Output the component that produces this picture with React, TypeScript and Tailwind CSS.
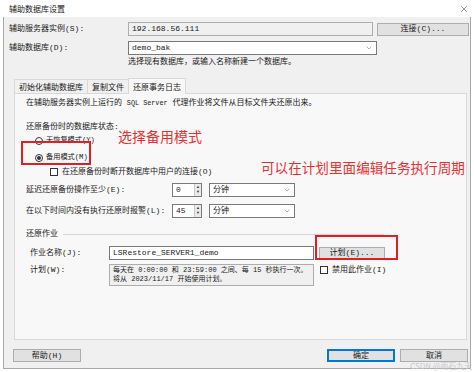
import { X, ChevronDown } from 'lucide-react';

const mono = "font-['Liberation_Mono','Noto_Sans_CJK_SC',monospace]";
const sans = "font-['Noto_Sans_CJK_SC','Noto_Sans',sans-serif]";

function Combo({ value, width }: { value: string; width: string }) {
  return (
    <div className={`${width} h-[14px] bg-white border border-[#7a7a7a] flex items-center justify-between pl-[3px] pr-[3px]`}>
      <span className="leading-none">{value}</span>
      <ChevronDown size={8} strokeWidth={1.5} className="text-[#606060]" />
    </div>
  );
}

function Spin({ value }: { value: string }) {
  return (
    <div className="w-[30px] h-[14px] bg-white border border-[#7a7a7a] flex items-stretch">
      <span className="flex-1 pl-[3px] leading-[12px]">{value}</span>
      <div className="w-[7px] flex flex-col items-center justify-center bg-[#eaeaea] border-l border-[#c8c8c8] text-[4px] leading-[5px] text-[#333]">
        <span>▲</span>
        <span>▼</span>
      </div>
    </div>
  );
}

function Radio({ checked, label }: { checked?: boolean; label: string }) {
  return (
    <div className="flex items-center gap-[3px] h-[10px] ml-[9px]">
      <span className="w-[8px] h-[8px] rounded-full border border-[#333] bg-white flex items-center justify-center">
        {checked && <span className="w-[4px] h-[4px] rounded-full bg-[#333]" />}
      </span>
      <span className="leading-none text-[7.2px]">{label}</span>
    </div>
  );
}

function Button({ label, width, focused }: { label: string; width: string; focused?: boolean }) {
  return (
    <div
      className={`${width} h-[13px] flex items-center justify-center bg-[#e1e1e1] border leading-none ${
        focused ? 'border-[#0078d7] shadow-[inset_0_0_0_1px_#0078d7]' : 'border-[#adadad]'
      }`}
    >
      {label}
    </div>
  );
}

export default function App() {
  return (
    <div className={`relative w-[474px] h-[372px] overflow-hidden bg-white text-[8px] text-[#1a1a1a] ${mono}`}>
      {/* Title bar */}
      <div className={`h-[17px] flex items-center justify-between pl-[9px] pr-[5px] ${sans}`}>
        <span className="text-[8px] leading-none">辅助数据库设置</span>
        <X size={10} strokeWidth={1.2} className="text-[#333]" />
      </div>

      {/* Window body */}
      <div className="ml-[3px] mr-[3px] h-[352px] bg-[#f0f0f0] border-l border-r border-b border-[#a8a8a8] pt-[5px]">
        <div className="flex items-center h-[14px] pl-[5px]">
          <span className="w-[119px]">辅助服务器实例(S):</span>
          <div className="w-[245px] h-[14px] border border-[#adadad] bg-[#f0f0f0] pl-[3px] leading-[12px]">192.168.56.111</div>
          <div className="ml-[4px]">
            <Button label="连接(C)..." width="w-[92px]" />
          </div>
        </div>
        <div className="flex items-center h-[15px] pl-[5px] mt-[4px]">
          <span className="w-[119px]">辅助数据库(D):</span>
          <Combo value="demo_bak" width="w-[249px]" />
        </div>
        <div className="pl-[124px] mt-[2px] h-[10px] leading-[10px]">选择现有数据库，或输入名称新建一个数据库。</div>

        {/* Tabs */}
        <div className={`flex items-end h-[16px] mt-[10px] pl-[10px] ${sans}`}>
          <div className="h-[14px] px-[4px] flex items-center border-t border-l border-[#d9d9d9] leading-none">初始化辅助数据库</div>
          <div className="h-[14px] px-[4px] flex items-center border-t border-l border-[#d9d9d9] leading-none">复制文件</div>
          <div className="h-[16px] px-[4px] flex items-center bg-[#f8f8f8] border-t border-l border-r border-[#d9d9d9] leading-none -mb-px relative z-10">
            还原事务日志
          </div>
        </div>

        {/* Tab panel */}
        <div className="ml-[10px] w-[453px] h-[247px] bg-[#f8f8f8] border border-[#d9d9d9] pl-[11px] pt-[4px]">
          <div className="h-[10px] leading-[10px]">
            在辅助服务器实例上运行的 <span className="text-[6.8px]">SQL Server</span> 代理作业将文件从目标文件夹还原出来。
          </div>
          <div className="h-[10px] leading-[10px] mt-[14px]">还原备份时的数据库状态:</div>
          <div className="mt-[4px]">
            <Radio label="无恢复模式(Y)" />
          </div>
          <div className="mt-[7px]">
            <Radio checked label="备用模式(M)" />
          </div>
          <div className="flex items-center gap-[4px] h-[10px] ml-[24px] mt-[4px]">
            <span className="w-[8px] h-[8px] border border-[#333] bg-white" />
            <span className="leading-none">在还原备份时断开数据库中用户的连接(O)</span>
          </div>

          <div className="flex items-center h-[14px] mt-[6px]">
            <span className="w-[146px]">延迟还原备份操作至少(E):</span>
            <Spin value="0" />
            <div className="ml-[7px]">
              <Combo value="分钟" width="w-[86px]" />
            </div>
          </div>
          <div className="flex items-center h-[14px] mt-[7px]">
            <span className="w-[146px]">在以下时间内没有执行还原时报警(L):</span>
            <Spin value="45" />
            <div className="ml-[7px]">
              <Combo value="分钟" width="w-[86px]" />
            </div>
          </div>

          <div className="flex items-center h-[10px] mt-[11px]">
            <span className="leading-none">还原作业</span>
            <div className="ml-[5px] w-[321px] h-px bg-[#d5d5d5]" />
          </div>

          <div className="flex items-center h-[14px] mt-[7px] pl-[4px]">
            <span className="w-[79px]">作业名称(J):</span>
            <div className="w-[205px] h-[14px] bg-white border border-[#7a7a7a] pl-[3px] leading-[12px]">LSRestore_SERVER1_demo</div>
            <div className="ml-[5px]">
              <Button label="计划(E)..." width="w-[66px]" />
            </div>
          </div>
          <div className="flex items-start mt-[4px] pl-[4px]">
            <span className="w-[79px] leading-[10px] mt-[1px]">计划(W):</span>
            <div className="w-[205px] h-[22px] border border-[#adadad] bg-[#f0f0f0] pl-[3px] pt-px leading-[9px] text-[7px] whitespace-nowrap">
              每天在 0:00:00 和 23:59:00 之间、每 15 秒执行一次。
              <br />
              将从 2023/11/17 开始使用计划。
            </div>
            <div className="flex items-center gap-[4px] ml-[6px] mt-[2px]">
              <span className="w-[8px] h-[8px] border border-[#333] bg-white" />
              <span className="leading-none">禁用此作业(I)</span>
            </div>
          </div>
        </div>

        {/* Bottom buttons */}
        <div className="flex items-center h-[13px] mt-[9px] pl-[9px] pr-[2px]">
          <Button label="帮助(H)" width="w-[68px]" />
          <div className="flex-1" />
          <Button label="确定" width="w-[68px]" focused />
          <div className="ml-[5px]">
            <Button label="取消" width="w-[68px]" />
          </div>
        </div>
      </div>

      {/* Annotations */}
      <div className="absolute left-[21px] top-[141px] w-[70px] h-[24px] border-2 border-[#e02020]" />
      <div className="absolute left-[315px] top-[235px] w-[83px] h-[25px] border-2 border-[#e02020]" />
      <div className={`absolute left-[118px] top-[129px] text-[14px] leading-none text-[#e83030] ${sans}`}>选择备用模式</div>
      <div className={`absolute left-[261px] top-[161px] text-[13.6px] leading-none text-[#e83030] ${sans}`}>可以在计划里面编辑任务执行周期</div>
      <div className={`absolute left-[410px] top-[362px] text-[8px] leading-none text-[#c8c8c8] ${sans}`}>CSDN @雨石九天</div>
    </div>
  );
}
